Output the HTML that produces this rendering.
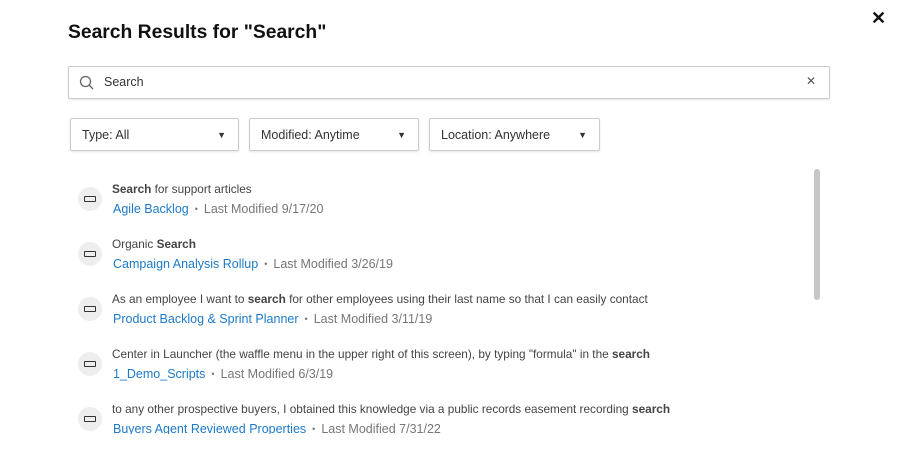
<!DOCTYPE html><html><head><style>
body{margin:0;width:900px;height:460px;background:#fff;font-family:"Liberation Sans",sans-serif;position:relative;overflow:hidden;color:#333}
.a{position:absolute}
h1{position:absolute;left:68px;top:22px;margin:0;font-size:19.3px;font-weight:bold;color:#111}
.sb{left:68px;top:66px;width:760px;height:31px;border:1px solid #ccc;border-radius:2px;box-shadow:0 1px 2px rgba(0,0,0,.1)}
.f{top:118px;height:33px;border:1px solid #ccc;border-radius:2px;box-shadow:0 1px 2px rgba(0,0,0,.1);font-size:12.5px;line-height:33px;box-sizing:border-box;padding-left:11px}
.f span{position:absolute;right:12px;top:0;font-size:9px}
.list{left:0;top:160px;width:900px;height:274px;overflow:hidden}
.r{position:absolute;left:0;width:900px;height:50px}
.ic{position:absolute;left:78px;top:12px;width:24px;height:24px;border-radius:50%;background:#eee}
.ic:after{content:"";position:absolute;left:6px;top:9px;width:10px;height:4px;border:1.5px solid #333;border-radius:1px}
.t{position:absolute;left:112px;font-size:11.8px;color:#444}
.l{position:absolute;left:113px;font-size:12.5px;color:#1e7ac8}
.l i{font-style:normal;color:#777;margin-left:6px}
.l i b{font-weight:normal;font-size:9px;margin-right:6px;vertical-align:1px}
</style></head><body>
<h1>Search Results for "Search"</h1>
<div class="a" style="left:871px;top:8px;font-size:18px;font-weight:bold;color:#111">✕</div>
<div class="a sb"></div>
<svg class="a" style="left:79px;top:75px" width="16" height="16" viewBox="0 0 16 16"><circle cx="6.5" cy="6.5" r="5" fill="none" stroke="#666" stroke-width="1.3"/><line x1="10.2" y1="10.2" x2="14" y2="14" stroke="#666" stroke-width="1.3"/></svg>
<div class="a" style="left:104px;top:75px;font-size:12.5px;color:#333">Search</div>
<div class="a" style="left:806px;top:74px;font-size:12px;color:#555">✕</div>
<div class="a f" style="left:70px;width:169px">Type: All<span>▼</span></div>
<div class="a f" style="left:249px;width:170px">Modified: Anytime<span>▼</span></div>
<div class="a f" style="left:429px;width:171px">Location: Anywhere<span>▼</span></div>
<div class="a" style="left:814px;top:169px;width:6px;height:131px;background:#c6c6c6;border-radius:3px"></div>
<div class="a list">
<div class="r" style="top:15px"><div class="ic"></div><div class="t" style="top:7px"><b>Search</b> for support articles</div><div class="l" style="top:27px">Agile Backlog<i><b>•</b>Last Modified 9/17/20</i></div></div>
<div class="r" style="top:70px"><div class="ic"></div><div class="t" style="top:7px">Organic <b>Search</b></div><div class="l" style="top:27px">Campaign Analysis Rollup<i><b>•</b>Last Modified 3/26/19</i></div></div>
<div class="r" style="top:125px"><div class="ic"></div><div class="t" style="top:7px">As an employee I want to <b>search</b> for other employees using their last name so that I can easily contact</div><div class="l" style="top:27px">Product Backlog &amp; Sprint Planner<i><b>•</b>Last Modified 3/11/19</i></div></div>
<div class="r" style="top:180px"><div class="ic"></div><div class="t" style="top:7px">Center in Launcher (the waffle menu in the upper right of this screen), by typing "formula" in the <b>search</b></div><div class="l" style="top:27px">1_Demo_Scripts<i><b>•</b>Last Modified 6/3/19</i></div></div>
<div class="r" style="top:235px"><div class="ic"></div><div class="t" style="top:7px">to any other prospective buyers, I obtained this knowledge via a public records easement recording <b>search</b></div><div class="l" style="top:27px">Buyers Agent Reviewed Properties<i><b>•</b>Last Modified 7/31/22</i></div></div>
</div>
</body></html>
